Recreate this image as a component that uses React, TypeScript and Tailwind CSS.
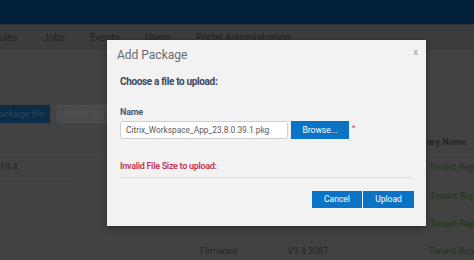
import React from "react";

export default function App() {
  const font = { fontFamily: "Roboto, 'Liberation Sans', sans-serif" };
  return (
    <div className="relative w-[474px] h-[260px] overflow-hidden bg-[#424242]" style={font}>
      {/* header */}
      <div className="h-[24px] bg-[#02203a]" />
      <div className="h-[1px] bg-[#2e3338]" />
      {/* nav */}
      <div className="h-[25px] bg-[#3c3c3c] border-b border-[#383838] flex items-center text-[10px] text-[#222222] whitespace-nowrap">
        <span className="ml-[-1px] w-[44px]">ules</span>
        <span className="w-[47px]">Jobs</span>
        <span className="w-[55px]">Events</span>
        <span className="w-[51px]">Users</span>
        <span>Portal Administration</span>
      </div>
      {/* toolbar */}
      <div className="flex gap-[7px] mt-[55px] h-[18px]">
        <div className="w-[50px] bg-[#0c2b47] text-[#2b4764] text-[9.5px] flex items-center justify-end pr-[6px] whitespace-nowrap overflow-hidden">ackage file</div>
        <div className="w-[50px] bg-[#4a4a4a] border border-[#505050] text-[9px] text-[#545454] flex items-center pl-[6px] whitespace-nowrap overflow-hidden">Unassign</div>
      </div>
      {/* table */}
      <div className="mt-[8px] text-[9px] text-[#242424] whitespace-nowrap">
        <div className="h-[24px] flex items-center border-b border-[#474747]">
          <span className="ml-[427px] font-bold text-[#262626]">ory Name</span>
        </div>
        <div className="h-[26px] flex items-center">
          <span className="w-[72px] h-[22px] flex items-center border-b border-[#474747]">10.4</span>
          <span className="ml-[358px] text-[#1c361c]">Tenant Rep</span>
        </div>
        <div className="h-[32px] flex items-center">
          <span className="ml-[430px] text-[#1c361c]">Tenant Rep</span>
        </div>
        <div className="h-[24px] flex items-center">
          <span className="ml-[430px] text-[#1c361c]">Tenant Rep</span>
        </div>
        <div className="h-[30px] flex items-center">
          <span className="ml-[200px] w-[88px]">Firmware</span>
          <span className="w-[142px]">V9.4.3087</span>
          <span className="text-[#1c361c]">Tenant Rep</span>
        </div>
      </div>

      {/* modal */}
      <div className="absolute left-[107px] top-[40px] w-[319px] h-[186px] bg-[#f2f2f2] shadow-[0_2px_6px_rgba(0,0,0,0.4)] flex flex-col px-[13px]">
        <div className="flex items-start justify-between mt-[4px] h-[22px]">
          <span className="text-[12px] text-[#6b6b6b] ml-[-3px] leading-[22px]">Add Package</span>
          <span className="text-[9px] text-[#9a9a9a] mt-[2px] mr-[-5px]">x</span>
        </div>
        <div className="mt-[10px] text-[10px] font-bold text-[#3b4660] leading-[12px] tracking-[-0.35px]">Choose a file to upload:</div>
        <div className="mt-[18px] text-[9px] font-bold text-[#4a5a7a] leading-[12px] tracking-[-0.2px]">Name</div>
        <div className="flex items-center mt-[3px]">
          <div className="w-[168px] h-[18px] bg-white border border-[#cfcfcf] rounded-[3px] flex items-center pl-[5px] text-[8.3px] text-[#5a5a5a] whitespace-nowrap">Citrix_Workspace_App_23.8.0.39.1.pkg</div>
          <div className="ml-[3px] w-[58px] h-[18px] bg-[#0b73c6] text-white text-[8.5px] flex items-center justify-center">Browse...</div>
          <span className="ml-[3px] text-[#d0334a] text-[8px] mt-[-5px]">*</span>
        </div>
        <div className="mt-[21px] text-[9px] font-semibold text-[#c33655] leading-[12px] tracking-[-0.3px]">Invalid File Size to upload:</div>
        <div className="mt-[5px] h-[1px] bg-[#dedede]" />
        <div className="flex justify-end gap-[1px] mt-[13px] mr-[-1px]">
          <div className="w-[50px] h-[17px] bg-[#0b73c6] text-white text-[8.5px] flex items-center justify-center">Cancel</div>
          <div className="w-[51px] h-[17px] bg-[#0b73c6] text-white text-[8.5px] flex items-center justify-center">Upload</div>
        </div>
      </div>
    </div>
  );
}
